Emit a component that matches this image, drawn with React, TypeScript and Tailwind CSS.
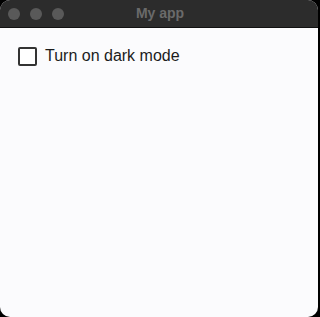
import React, { useState } from 'react';

const App: React.FC = () => {
  const [dark, setDark] = useState(false);

  return (
    <div className="w-[320px] h-[317px] bg-black overflow-hidden" style={{ fontFamily: '"Liberation Sans", Arial, sans-serif' }}>
      <div className="w-[318px] h-[317px] rounded-[10px] overflow-hidden flex flex-col bg-[#fbfbfd]">
        {/* Title bar */}
        <div className="h-[28px] bg-[#2c2c2c] border-b border-[#111] flex items-center relative shrink-0">
          <div className="flex items-center gap-[10px] pl-[8px]">
            <span className="w-[12px] h-[12px] rounded-full bg-[#595959]"></span>
            <span className="w-[12px] h-[12px] rounded-full bg-[#595959]"></span>
            <span className="w-[12px] h-[12px] rounded-full bg-[#595959]"></span>
          </div>
          <div className="absolute inset-0 flex items-center justify-center text-[14px] font-bold text-[#6a6a6a] pl-[2px]">
            My app
          </div>
        </div>

        {/* Content */}
        <div className="flex-1 px-[18px] pt-[18px]">
          <label className="flex items-center gap-[8px] cursor-pointer">
            <span
              onClick={() => setDark(!dark)}
              className="w-[19px] h-[19px] border-2 border-[#333] rounded-[2px] bg-white"
            ></span>
            <span className="text-[16px] text-[#1c1c1c] leading-[20px]">Turn on dark mode</span>
          </label>
        </div>
      </div>
    </div>
  );
};

export default App;
